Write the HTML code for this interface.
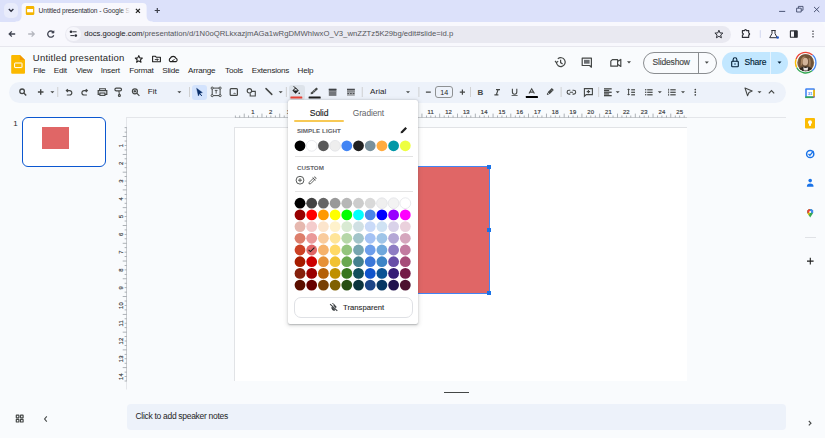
<!DOCTYPE html>
<html><head><meta charset="utf-8">
<style>
*{margin:0;padding:0;box-sizing:border-box}
html,body{width:825px;height:438px;overflow:hidden;background:#f9fbfd;font-family:"Liberation Sans",sans-serif;color:#1f1f1f}
.a{position:absolute}
svg{position:absolute;overflow:visible}
.t{position:absolute;white-space:nowrap;line-height:1}
</style></head><body>

<!-- ===== Chrome tab strip ===== -->
<div class="a" style="left:0;top:0;width:825px;height:22px;background:#dce1fa"></div>
<!-- active tab -->
<svg style="left:0;top:0" width="200" height="24"><path d="M15.5 21.6 Q21.6 21.6 21.6 16 V7 Q21.6 3 25.6 3 H142.6 Q146.6 3 146.6 7 V16 Q146.6 21.6 152.7 21.6 V24 H15.5 Z" fill="#f8f8fd"/></svg>
<div class="a" style="left:3.5px;top:3px;width:14.5px;height:14.5px;border-radius:5px;background:#e9ecfb"></div>
<svg style="left:0;top:0" width="825" height="22">
  <path d="M8.8 9 L11.1 11.3 L13.4 9" fill="none" stroke="#2d3040" stroke-width="1.3"/>
</svg>
<svg style="left:0;top:0" width="40" height="22"><rect x="25.8" y="6.1" width="8.5" height="8.9" rx="1.3" fill="#f4b400"/><rect x="27.1" y="9" width="6" height="3.3" fill="#fff"/></svg>
<div class="t" style="left:38.6px;top:8.2px;font-size:6.7px;letter-spacing:-0.12px;color:#2e3036">Untitled presentation - Google S</div>
<div class="a" style="left:120px;top:4px;width:12px;height:14px;background:linear-gradient(90deg,rgba(248,248,253,0),#f8f8fd 85%)"></div>
<svg style="left:0;top:0" width="825" height="22">
  <path d="M135.9 8.9 L139.9 12.9 M139.9 8.9 L135.9 12.9" stroke="#1f1f1f" stroke-width="1.2"/>
  <path d="M157.3 7.9 V13.1 M154.7 10.5 H159.9" stroke="#3c3f4a" stroke-width="1.2"/>
  <path d="M779.1 11.4 H785.2" stroke="#3b4566" stroke-width="0.9"/>
  <path d="M796.6 8.2 h4.6 v3.8 h-4.6 z M798.4 8.2 V6.4 h4.6 v3.8 h-1.8" fill="none" stroke="#3b4566" stroke-width="0.85"/>
  <path d="M814 6.9 L819.3 12.1 M819.3 6.9 L814 12.1" stroke="#3b4566" stroke-width="0.9"/>
</svg>

<!-- ===== Chrome toolbar ===== -->
<div class="a" style="left:0;top:21.6px;width:825px;height:24.4px;background:#f8f8fd;border-radius:3px 7px 0 0"></div>
<div class="a" style="left:0;top:45.5px;width:825px;height:0.8px;background:#e7e7ee"></div>
<div class="a" style="left:64.8px;top:25.5px;width:666px;height:17px;border-radius:9px;background:#e9e9f1"></div>
<div class="a" style="left:66.4px;top:26.8px;width:14.4px;height:14.4px;border-radius:7.2px;background:#f6f6fb"></div>
<div class="t" style="left:84.2px;top:30.2px;font-size:7.7px;color:#54565b"><span style="color:#202124">docs.google.com</span>/presentation/d/1N0oQRLkxazjmAGa1wRgDMWhIwxO_V3_wnZZTz5K29bg/edit#slide=id.p</div>
<svg style="left:0;top:0" width="825" height="48">
  <!-- back -->
  <path d="M15.2 34 H9.2 M11.8 31.4 L9.2 34 L11.8 36.6" fill="none" stroke="#3f4350" stroke-width="1.3"/>
  <path d="M28.2 34 H34.2 M31.6 31.4 L34.2 34 L31.6 36.6" fill="none" stroke="#b4b6be" stroke-width="1.3"/>
  <!-- reload -->
  <path d="M53.4 32.4 A3.1 3.1 0 1 0 53.7 35.2" fill="none" stroke="#3f4350" stroke-width="1.3"/>
  <path d="M53.9 30.8 V33 H51.7 Z" fill="#3f4350" stroke="#3f4350" stroke-width="0.8" stroke-linejoin="round"/>
  <!-- tune -->
  <path d="M72.4 31.8 H76.6 M70.4 35.6 H74.4" stroke="#2d2f36" stroke-width="1"/>
  <circle cx="71" cy="31.8" r="1.3" fill="#2d2f36"/><circle cx="75.8" cy="35.6" r="1.3" fill="#2d2f36"/>
  <!-- star -->
  <path d="M718.9 30.2 L720 32.9 L722.9 33.1 L720.7 35 L721.4 37.8 L718.9 36.3 L716.4 37.8 L717.1 35 L714.9 33.1 L717.8 32.9 Z" fill="none" stroke="#2d2f36" stroke-width="1"/>
  <!-- extension -->
  <path d="M742.4 30.6 H744.6 A0.95 0.95 0 0 1 746.5 30.6 H748.7 V33 A0.95 0.95 0 0 1 748.7 34.9 V37.4 H742.4 V35 A0.95 0.95 0 0 0 742.4 33.1 Z" fill="none" stroke="#2d2f36" stroke-width="1.15" stroke-linejoin="round"/>
  <path d="M760.3 30.2 V37.8" stroke="#c9d0ee" stroke-width="0.8"/>
  <!-- flask -->
  <path d="M772 30.5 V33.5 L769.7 37.7 H777.2 L775 33.5 V30.5 M771.3 30.5 H775.7" fill="none" stroke="#2d2f36" stroke-width="1"/>
  <circle cx="777.7" cy="37.5" r="1.3" fill="#2458c6"/>
  <!-- sidepanel -->
  <rect x="790.4" y="30.9" width="6.8" height="6.4" rx="0.4" fill="none" stroke="#2d2f36" stroke-width="1.1"/>
  <rect x="794" y="30.9" width="3.2" height="6.4" fill="#2d2f36"/>
  <!-- kebab -->
  <circle cx="813" cy="31.2" r="0.75" fill="#2d2f36"/><circle cx="813" cy="34" r="0.75" fill="#2d2f36"/><circle cx="813" cy="36.8" r="0.75" fill="#2d2f36"/>
</svg>


<!-- ===== Slides header ===== -->
<svg style="left:0;top:0" width="825" height="80">
  <path d="M12.2 54.9 H19.9 L25 60 V72.8 A1 1 0 0 1 24 73.8 H12.2 A1 1 0 0 1 11.2 72.8 V55.9 A1 1 0 0 1 12.2 54.9 Z" fill="#fbb900"/>
  <path d="M19.9 54.9 L25 60 H19.9 Z" fill="#f29900"/>
  <rect x="14.6" y="63" width="7.4" height="4.6" rx="0.4" fill="none" stroke="#fff" stroke-width="1"/>
  <!-- star -->
  <path d="M138.8 55.6 L139.8 57.9 L142.3 58.1 L140.4 59.8 L141 62.2 L138.8 60.9 L136.6 62.2 L137.2 59.8 L135.3 58.1 L137.8 57.9 Z" fill="none" stroke="#1f1f1f" stroke-width="1.1" stroke-linejoin="round"/>
  <!-- folder -->
  <path d="M152.6 56.2 H155.2 L156.2 57.2 H160.4 V61.8 H152.6 Z" fill="none" stroke="#1f1f1f" stroke-width="1.1" stroke-linejoin="round"/>
  <path d="M154.8 59.6 H158.1 M157 58.4 L158.2 59.6 L157 60.8" fill="none" stroke="#1f1f1f" stroke-width="0.9"/>
  <!-- cloud -->
  <path d="M170.2 61.6 A1.9 1.9 0 0 1 170.3 58.3 A3 3 0 0 1 175.9 58.3 A1.8 1.8 0 0 1 176.2 61.6 Z" fill="none" stroke="#1f1f1f" stroke-width="1.1" stroke-linejoin="round"/>
  <path d="M172 60.2 L172.8 60.9 L174.6 59" fill="none" stroke="#1f1f1f" stroke-width="0.9"/>
  <!-- history -->
  <path d="M556.4 62.3 A4.4 4.4 0 1 0 557.8 58.9" fill="none" stroke="#444746" stroke-width="1.2"/>
  <path d="M555 60.9 L556.4 62.7 L558.2 61.1" fill="none" stroke="#444746" stroke-width="1.1"/>
  <path d="M560.6 59.8 V62.6 L562.6 63.9" fill="none" stroke="#444746" stroke-width="1.2"/>
  <!-- comments -->
  <path d="M582.2 58.1 H591.4 V67.2 L589.6 65.5 H582.2 Z" fill="none" stroke="#444746" stroke-width="1.2" stroke-linejoin="round"/>
  <rect x="584" y="59.8" width="5.6" height="3.9" fill="#6b6e72"/>
  <!-- meet -->
  <path d="M612.4 59.6 H617.6 V66.2 H610.8 V61.2 Z M617.6 61.6 L620.8 59.4 V66.4 L617.6 64.2" fill="none" stroke="#444746" stroke-width="1.2" stroke-linejoin="round"/>
  <path d="M627 61.3 H631 L629 63.5 Z" fill="#444746"/>
</svg>
<div class="t" style="left:32.8px;top:52.9px;font-size:9.5px;letter-spacing:0.22px;color:#262626">Untitled presentation</div>
<div class="t" style="left:33.2px;top:67.3px;font-size:8.1px;letter-spacing:-0.22px;color:#1f1f1f">File</div>
<div class="t" style="left:53.8px;top:67.3px;font-size:8.1px;letter-spacing:-0.22px;color:#1f1f1f">Edit</div>
<div class="t" style="left:75.9px;top:67.3px;font-size:8.1px;letter-spacing:-0.22px;color:#1f1f1f">View</div>
<div class="t" style="left:100.8px;top:67.3px;font-size:8.1px;letter-spacing:-0.22px;color:#1f1f1f">Insert</div>
<div class="t" style="left:129.2px;top:67.3px;font-size:8.1px;letter-spacing:-0.22px;color:#1f1f1f">Format</div>
<div class="t" style="left:162.3px;top:67.3px;font-size:8.1px;letter-spacing:-0.22px;color:#1f1f1f">Slide</div>
<div class="t" style="left:188px;top:67.3px;font-size:8.1px;letter-spacing:-0.22px;color:#1f1f1f">Arrange</div>
<div class="t" style="left:225.1px;top:67.3px;font-size:8.1px;letter-spacing:-0.22px;color:#1f1f1f">Tools</div>
<div class="t" style="left:251.8px;top:67.3px;font-size:8.1px;letter-spacing:-0.22px;color:#1f1f1f">Extensions</div>
<div class="t" style="left:297.6px;top:67.3px;font-size:8.1px;letter-spacing:-0.22px;color:#1f1f1f">Help</div>

<div class="a" style="left:643.4px;top:52px;width:74px;height:21.8px;border:0.9px solid #8a8d90;border-radius:11px"></div>
<div class="a" style="left:698.4px;top:52px;width:0.9px;height:21.8px;background:#8a8d90"></div>
<div class="t" style="left:652.6px;top:58.2px;font-size:8.5px;letter-spacing:-0.18px;color:#444746;-webkit-text-stroke:0.15px #444746">Slideshow</div>
<div class="a" style="left:721.8px;top:52px;width:66.6px;height:21.8px;background:#c2e7ff;border-radius:11px"></div>
<div class="a" style="left:770.2px;top:52px;width:0.8px;height:21.8px;background:#e6f4ff"></div>
<div class="t" style="left:744.6px;top:58px;font-size:8.5px;letter-spacing:-0.2px;color:#001d35;-webkit-text-stroke:0.15px #001d35">Share</div>
<svg style="left:0;top:0" width="825" height="80">
  <path d="M704.8 61.6 H708.8 L706.8 63.8 Z" fill="#444746"/>
  <path d="M777.5 61.6 H781.5 L779.5 63.8 Z" fill="#001d35"/>
  <rect x="731.7" y="61.2" width="6.6" height="5.5" rx="0.8" fill="none" stroke="#001d35" stroke-width="1.1"/>
  <path d="M733.1 61.2 V59.7 A1.9 1.9 0 0 1 736.9 59.7 V61.2" fill="none" stroke="#001d35" stroke-width="1.1"/><circle cx="735" cy="64" r="0.7" fill="#001d35"/>
  <path d="M796.13 59.03 A10.25 10.25 0 0 1 812.56 55.08" fill="none" stroke="#ea4335" stroke-width="1.3"/><path d="M812.56 55.08 A10.25 10.25 0 0 1 812.15 70.67" fill="none" stroke="#4285f4" stroke-width="1.3"/><path d="M812.15 70.67 A10.25 10.25 0 0 1 796.65 67.51" fill="none" stroke="#34a853" stroke-width="1.3"/><path d="M796.65 67.51 A10.25 10.25 0 0 1 796.13 59.03" fill="none" stroke="#fbbc04" stroke-width="1.3"/><circle cx="805.7" cy="62.7" r="8.5" fill="#8b6b4c"/>
  <path d="M798.5 61 Q799 54.5 805.5 54.2 Q812.5 54.5 813 61 Q813.5 67 811 70 H800.5 Q798 67 798.5 61 Z" fill="#6f5238"/>
  <ellipse cx="805.2" cy="61.6" rx="2.9" ry="3.9" fill="#d3b49a"/>
  <path d="M801 60 Q802 56 805.5 56.5 Q803 58 802.8 62 Q802 66 800.6 66 Z" fill="#a88462"/>
  <path d="M810 58 Q811.5 62 810.5 67 L808.6 66 Q809.6 62 808.6 58.5 Z" fill="#a08060"/>
  <path d="M799.3 68.4 Q805.7 64.5 812.1 68.4 A8.5 8.5 0 0 1 799.3 68.4 Z" fill="#2e2620"/>
  <path d="M803.2 67.2 Q805.6 68.6 808.2 67.2 L807.6 70.6 H803.8 Z" fill="#e8e2e0"/>
</svg>

<!-- ===== Toolbar pill ===== -->
<div class="a" style="left:9px;top:81.8px;width:777px;height:20.8px;border-radius:10.4px;background:#edf2fa"></div>
<div class="a" style="left:191.9px;top:84.7px;width:15.1px;height:15.2px;border-radius:3px;background:#d3e3fd"></div>
<div class="a" style="left:288.7px;top:84.7px;width:16.7px;height:15px;border-radius:3px;background:#dde3ea"></div>
<div class="t" style="left:147.7px;top:88.3px;font-size:8.1px;color:#1f1f1f">Fit</div>
<div class="t" style="left:370.1px;top:88px;font-size:8.1px;color:#1f1f1f">Arial</div>
<div class="a" style="left:435.4px;top:85.6px;width:18.1px;height:12.8px;border:0.9px solid #8e9193;border-radius:3px"></div>
<div class="t" style="left:440.3px;top:88.6px;font-size:7.2px;color:#1f1f1f">14</div>
<svg style="left:0;top:0" width="825" height="110">
  <g fill="none" stroke="#444746" stroke-width="1.1">
  <!-- search -->
  <circle cx="22.1" cy="91.3" r="2.3" stroke-width="1.3"/><path d="M23.8 93 L26.2 95.4" stroke-width="1.4"/>
  <!-- plus -->
  <path d="M40.7 89.2 V94.8 M37.9 92 H43.5" stroke-width="1.4"/>
  <!-- undo / redo -->
  <path d="M66.5 90.6 H69.6 A2.2 2.2 0 0 1 69.6 95 H66.8 M67.9 89.2 L66.4 90.6 L67.9 92" stroke-width="1.2"/>
  <path d="M87.2 90.6 H84.1 A2.2 2.2 0 0 0 84.1 95 H86.9 M85.8 89.2 L87.3 90.6 L85.8 92" stroke-width="1.2"/>
  <!-- print -->
  <path d="M99.6 90.4 V88.8 H105.4 V90.4" stroke-width="1.1"/><path d="M98.2 90.6 H106.8 V94.3 H98.2 Z" stroke-width="1.2"/><rect x="99.9" y="93" width="5" height="2.4" fill="#edf2fa" stroke-width="1.1"/>
  <!-- paint format -->
  <rect x="114.9" y="88.1" width="6.6" height="2.8" rx="1.4" stroke-width="1.2"/><path d="M118.9 91 L119.3 94" stroke-width="1.1"/><circle cx="119.4" cy="95.4" r="1" stroke-width="1.1"/>
  <!-- zoom -->
  <circle cx="134.9" cy="91.3" r="2.5" stroke-width="1.2"/><path d="M136.8 93.2 L139.4 95.8 M133.6 91.3 H136.2 M134.9 90 V92.6" stroke-width="1.2"/>
  <!-- textbox -->
  <rect x="212.2" y="88.1" width="7.9" height="7.5" stroke-width="1"/>
  <circle cx="212.2" cy="88.1" r="1.1" fill="#edf2fa" stroke-width="0.9"/><circle cx="220.1" cy="88.1" r="1.1" fill="#edf2fa" stroke-width="0.9"/>
  <circle cx="212.2" cy="95.6" r="1.1" fill="#edf2fa" stroke-width="0.9"/><circle cx="220.1" cy="95.6" r="1.1" fill="#edf2fa" stroke-width="0.9"/>
  <path d="M214.8 90.4 H217.5 M216.15 90.4 V93.6" stroke-width="0.9"/>
  <!-- image -->
  <rect x="230.2" y="88.6" width="7.2" height="6.8" rx="0.9" stroke-width="1.2"/>
  <!-- shape -->
  <circle cx="249.4" cy="90.8" r="2.2" stroke-width="1.1"/><path d="M251.4 91.4 H255.3 V96 H250.2 V93.2" stroke-width="1.1"/>
  <!-- line -->
  <path d="M266 88.6 L271.8 94.4" stroke-width="1.5" stroke-linecap="round"/>
  <!-- border weight / dash -->
  <!-- minus / plus -->
  <path d="M425.9 92.2 H430.8 M462.4 89.5 V94.8 M459.8 92.2 H465" stroke-width="1.2"/>
  <!-- link -->
  <path d="M570.3 90.3 H569 A1.9 1.9 0 0 0 569 94.1 H570.3 M572.5 90.3 H573.8 A1.9 1.9 0 0 1 573.8 94.1 H572.5 M569.8 92.2 H573"/>
  <!-- comment add -->
  <path d="M584.4 88.6 H592.4 V94.6 H586.3 L584.4 96.2 Z M588.4 89.9 V93.3 M586.7 91.6 H590.1"/>
  <!-- line spacing -->
  
  <!-- cursor -->
  <path d="M745 88 L752.2 90.9 L749 92.4 L747.5 95.7 Z" stroke-linejoin="round"/>
  <path d="M768.8 93.3 L771.5 90.6 L774.2 93.3" stroke-width="1.2"/>
  </g>
  <!-- separators -->
  <g fill="#c7c7c7">
  <rect x="57.4" y="87" width="0.8" height="10"/><rect x="189.1" y="87" width="0.8" height="10"/><rect x="285.9" y="87" width="0.8" height="10"/>
  <rect x="361.8" y="87" width="0.8" height="10"/><rect x="418.5" y="87" width="0.8" height="10"/><rect x="470.1" y="87" width="0.8" height="10"/>
  <rect x="598.3" y="87" width="0.8" height="10"/><rect x="560.7" y="87" width="0.8" height="10"/>
  </g>
  <g fill="#444746">
  <!-- carets -->
  <path d="M50.4 91.3 H54.4 L52.4 93.3 Z"/><path d="M177.4 91.3 H181.4 L179.4 93.3 Z"/><path d="M278.7 91.3 H282.7 L280.7 93.3 Z"/>
  <path d="M406 91.3 H410 L408 93.3 Z"/><path d="M615.7 91.3 H619.7 L617.7 93.3 Z"/><path d="M657.8 91.3 H661.8 L659.8 93.3 Z"/>
  <path d="M681 91.3 H685 L683 93.3 Z"/><path d="M757.5 91.3 H761.5 L759.5 93.3 Z"/>
  <!-- image inner -->
  <path d="M233.2 93.8 L234.2 92.6 L235 93.4 L235.6 92.9 L236.2 93.8 Z"/>
  <!-- border weight -->
  <rect x="328.8" y="88.8" width="7.6" height="7.1" fill="#74777b"/><rect x="328.8" y="88.8" width="7.6" height="1.4" fill="#3f4246"/><rect x="328.8" y="91" width="7.6" height="0.5" fill="#9a9da1"/>
  <!-- border dash -->
  <rect x="347" y="88.8" width="7.8" height="7.1" fill="#a9acb0"/><rect x="347" y="88.8" width="7.8" height="1.4" fill="#4a4d51"/>
  <rect x="347.4" y="93" width="1.6" height="1.1" fill="#4a4d51"/><rect x="350.1" y="93" width="1.6" height="1.1" fill="#4a4d51"/><rect x="352.8" y="93" width="1.6" height="1.1" fill="#4a4d51"/>
  <rect x="347" y="90.6" width="7.8" height="1.8" fill="#8c8f93"/>
  <!-- B I U A -->
  <text x="480.4" y="95.3" font-size="8" font-weight="700" text-anchor="middle" font-family="Liberation Sans">B</text>
  <path d="M496 89.6 H500 M494.4 94.9 H498.4 M498.1 89.6 L496.3 94.9" fill="none" stroke="#444746" stroke-width="1.2"/>
  <path d="M512.4 88.8 V92 A2.2 2.2 0 0 0 516.8 92 V88.8" fill="none" stroke="#444746" stroke-width="1.1"/><rect x="511.6" y="95.2" width="6" height="0.8"/>
  <path d="M529 93.6 L531.7 88.8 L534.4 93.6 M529.9 92.1 H533.5" fill="none" stroke="#444746" stroke-width="1.1"/>
  <rect x="525.8" y="96" width="12.2" height="1.9" rx="0.4" fill="#000"/>
  <!-- highlighter -->
  <path d="M547.6 92.2 L551.8 88 L553.8 90 L549.6 94.2 Z M547.2 92.8 L549 94.6 L547.4 94.9 L546.8 94.3 Z"/><path d="M551.3 89.9 L552 90.6" stroke="#edf2fa" stroke-width="0.6"/>
  <!-- align -->
  <rect x="604" y="88.2" width="7.7" height="1.3"/><rect x="604" y="89.9" width="5.2" height="1.3"/><rect x="604" y="91.6" width="7.7" height="1.3"/><rect x="604" y="93.3" width="5.2" height="1.3"/><rect x="604" y="95" width="7.7" height="1.3"/>
  <!-- bullets -->
  <circle cx="645.7" cy="89.8" r="0.75"/><circle cx="645.7" cy="92.3" r="0.75"/><circle cx="645.7" cy="94.8" r="0.75"/>
  <rect x="647.2" y="89.2" width="5.4" height="1.2"/><rect x="647.2" y="91.7" width="5.4" height="1.2"/><rect x="647.2" y="94.2" width="5.4" height="1.2"/>
  <!-- numbered -->
  <rect x="668.2" y="88.8" width="0.9" height="1.9"/><rect x="668.2" y="91.3" width="0.9" height="1.9"/><rect x="668.2" y="93.8" width="0.9" height="1.9"/>
  <rect x="670.3" y="89.2" width="5.4" height="1.2"/><rect x="670.3" y="91.7" width="5.4" height="1.2"/><rect x="670.3" y="94.2" width="5.4" height="1.2"/>
  <!-- line spacing -->
  <rect x="631.2" y="89.2" width="3.8" height="1.2"/><rect x="631.2" y="91.7" width="3.8" height="1.2"/><rect x="631.2" y="94.2" width="3.8" height="1.2"/>
  <path d="M627 90 L628.6 88.6 L630.2 90 Z M627 94 L628.6 95.4 L630.2 94 Z"/><rect x="628.1" y="89.6" width="1" height="4.6"/>
  <!-- kebab -->
  <circle cx="695.3" cy="89.6" r="0.85"/><circle cx="695.3" cy="92.2" r="0.85"/><circle cx="695.3" cy="94.8" r="0.85"/>
  <!-- select arrow -->
  <path d="M196.6 88.2 L202.4 92.6 L199.8 93.2 L198.4 96 Z" fill="#0b2f6b" stroke="#0b2f6b" stroke-width="0.4" stroke-linejoin="round"/><path d="M199.4 93 L201.8 96" stroke="#0b2f6b" stroke-width="1"/>
  </g>
  <!-- fill color -->
  <path d="M292.4 90.6 L295.6 87.4 L298.8 90.6 L295.6 93.8 Z" fill="#1f1f1f"/>
  <path d="M293.6 90.6 L295.6 88.6 L297.6 90.6 Z" fill="#dde3ea"/>
  <path d="M293.6 86.2 L296 88.6" stroke="#1f1f1f" stroke-width="1"/>
  <circle cx="299.2" cy="93.3" r="0.8" fill="#1f1f1f"/>
  <rect x="290.4" y="96.4" width="11.9" height="2.1" rx="0.5" fill="#ea4335"/>
  <!-- pen -->
  <path d="M310.6 94.3 L311 92.4 L316.4 87.4 L318 89 L312.6 94 Z" fill="#444746"/>
  <path d="M312.5 91.2 L314 92.6 M314 89.8 L315.5 91.2" stroke="#edf2fa" stroke-width="0.5"/>
  <rect x="308.6" y="96.6" width="12.1" height="1.9" rx="0.5" fill="#1f1f1f"/>
</svg>


<!-- ===== Filmstrip ===== -->
<div class="t" style="left:13.2px;top:120.1px;font-size:8px;color:#1f1f1f">1</div>
<div class="a" style="left:22px;top:117.4px;width:83.6px;height:49.4px;border:1.8px solid #0b57d0;border-radius:6px;background:#fff"></div>
<div class="a" style="left:42.3px;top:127px;width:26.7px;height:21.9px;background:#e06666"></div>

<!-- ===== Canvas ===== -->
<div class="a" style="left:234.2px;top:126.8px;width:452.8px;height:254.6px;background:#fff;border-top:1px solid #e1e3e6;border-left:1px solid #e1e3e6"></div>
<div class="a" style="left:340px;top:166px;width:149.5px;height:127.8px;background:#e06666;border:1px solid #4285f4"></div>
<div class="a" style="left:487px;top:165px;width:4px;height:4px;background:#1a73e8"></div>
<div class="a" style="left:487px;top:228px;width:4px;height:4px;background:#1a73e8"></div>
<div class="a" style="left:487px;top:291.2px;width:4px;height:4px;background:#1a73e8"></div>
<svg style="left:0;top:0" width="825" height="438">
<rect x="126.4" y="117.2" width="659.6" height="0.8" fill="#dfe1e5"/>
<rect x="126.2" y="117.2" width="0.8" height="272.3" fill="#dfe1e5"/>
<rect x="235" y="117.2" width="452" height="0.8" fill="#bfc2c6"/>
<rect x="126.2" y="127.3" width="0.8" height="254" fill="#bfc2c6"/>
<g fill="#9aa0a6"><rect x="234.90" y="115.50" width="0.8" height="2.1"/><rect x="239.34" y="115.50" width="0.8" height="2.1"/><rect x="243.79" y="113.60" width="0.8" height="4.0"/><rect x="248.23" y="115.50" width="0.8" height="2.1"/><rect x="252.68" y="115.50" width="0.8" height="2.1"/><rect x="257.12" y="115.50" width="0.8" height="2.1"/><rect x="261.56" y="113.60" width="0.8" height="4.0"/><rect x="266.01" y="115.50" width="0.8" height="2.1"/><rect x="270.45" y="115.50" width="0.8" height="2.1"/><rect x="274.90" y="115.50" width="0.8" height="2.1"/><rect x="279.34" y="113.60" width="0.8" height="4.0"/><rect x="283.78" y="115.50" width="0.8" height="2.1"/><rect x="288.23" y="115.50" width="0.8" height="2.1"/><rect x="292.67" y="115.50" width="0.8" height="2.1"/><rect x="297.11" y="113.60" width="0.8" height="4.0"/><rect x="301.56" y="115.50" width="0.8" height="2.1"/><rect x="306.00" y="115.50" width="0.8" height="2.1"/><rect x="310.45" y="115.50" width="0.8" height="2.1"/><rect x="314.89" y="113.60" width="0.8" height="4.0"/><rect x="319.33" y="115.50" width="0.8" height="2.1"/><rect x="323.78" y="115.50" width="0.8" height="2.1"/><rect x="328.22" y="115.50" width="0.8" height="2.1"/><rect x="332.67" y="113.60" width="0.8" height="4.0"/><rect x="337.11" y="115.50" width="0.8" height="2.1"/><rect x="341.55" y="115.50" width="0.8" height="2.1"/><rect x="346.00" y="115.50" width="0.8" height="2.1"/><rect x="350.44" y="113.60" width="0.8" height="4.0"/><rect x="354.89" y="115.50" width="0.8" height="2.1"/><rect x="359.33" y="115.50" width="0.8" height="2.1"/><rect x="363.77" y="115.50" width="0.8" height="2.1"/><rect x="368.22" y="113.60" width="0.8" height="4.0"/><rect x="372.66" y="115.50" width="0.8" height="2.1"/><rect x="377.10" y="115.50" width="0.8" height="2.1"/><rect x="381.55" y="115.50" width="0.8" height="2.1"/><rect x="385.99" y="113.60" width="0.8" height="4.0"/><rect x="390.44" y="115.50" width="0.8" height="2.1"/><rect x="394.88" y="115.50" width="0.8" height="2.1"/><rect x="399.32" y="115.50" width="0.8" height="2.1"/><rect x="403.77" y="113.60" width="0.8" height="4.0"/><rect x="408.21" y="115.50" width="0.8" height="2.1"/><rect x="412.66" y="115.50" width="0.8" height="2.1"/><rect x="417.10" y="115.50" width="0.8" height="2.1"/><rect x="421.54" y="113.60" width="0.8" height="4.0"/><rect x="425.99" y="115.50" width="0.8" height="2.1"/><rect x="430.43" y="115.50" width="0.8" height="2.1"/><rect x="434.88" y="115.50" width="0.8" height="2.1"/><rect x="439.32" y="113.60" width="0.8" height="4.0"/><rect x="443.76" y="115.50" width="0.8" height="2.1"/><rect x="448.21" y="115.50" width="0.8" height="2.1"/><rect x="452.65" y="115.50" width="0.8" height="2.1"/><rect x="457.09" y="113.60" width="0.8" height="4.0"/><rect x="461.54" y="115.50" width="0.8" height="2.1"/><rect x="465.98" y="115.50" width="0.8" height="2.1"/><rect x="470.43" y="115.50" width="0.8" height="2.1"/><rect x="474.87" y="113.60" width="0.8" height="4.0"/><rect x="479.31" y="115.50" width="0.8" height="2.1"/><rect x="483.76" y="115.50" width="0.8" height="2.1"/><rect x="488.20" y="115.50" width="0.8" height="2.1"/><rect x="492.65" y="113.60" width="0.8" height="4.0"/><rect x="497.09" y="115.50" width="0.8" height="2.1"/><rect x="501.53" y="115.50" width="0.8" height="2.1"/><rect x="505.98" y="115.50" width="0.8" height="2.1"/><rect x="510.42" y="113.60" width="0.8" height="4.0"/><rect x="514.87" y="115.50" width="0.8" height="2.1"/><rect x="519.31" y="115.50" width="0.8" height="2.1"/><rect x="523.75" y="115.50" width="0.8" height="2.1"/><rect x="528.20" y="113.60" width="0.8" height="4.0"/><rect x="532.64" y="115.50" width="0.8" height="2.1"/><rect x="537.09" y="115.50" width="0.8" height="2.1"/><rect x="541.53" y="115.50" width="0.8" height="2.1"/><rect x="545.97" y="113.60" width="0.8" height="4.0"/><rect x="550.42" y="115.50" width="0.8" height="2.1"/><rect x="554.86" y="115.50" width="0.8" height="2.1"/><rect x="559.30" y="115.50" width="0.8" height="2.1"/><rect x="563.75" y="113.60" width="0.8" height="4.0"/><rect x="568.19" y="115.50" width="0.8" height="2.1"/><rect x="572.64" y="115.50" width="0.8" height="2.1"/><rect x="577.08" y="115.50" width="0.8" height="2.1"/><rect x="581.52" y="113.60" width="0.8" height="4.0"/><rect x="585.97" y="115.50" width="0.8" height="2.1"/><rect x="590.41" y="115.50" width="0.8" height="2.1"/><rect x="594.86" y="115.50" width="0.8" height="2.1"/><rect x="599.30" y="113.60" width="0.8" height="4.0"/><rect x="603.74" y="115.50" width="0.8" height="2.1"/><rect x="608.19" y="115.50" width="0.8" height="2.1"/><rect x="612.63" y="115.50" width="0.8" height="2.1"/><rect x="617.08" y="113.60" width="0.8" height="4.0"/><rect x="621.52" y="115.50" width="0.8" height="2.1"/><rect x="625.96" y="115.50" width="0.8" height="2.1"/><rect x="630.41" y="115.50" width="0.8" height="2.1"/><rect x="634.85" y="113.60" width="0.8" height="4.0"/><rect x="639.29" y="115.50" width="0.8" height="2.1"/><rect x="643.74" y="115.50" width="0.8" height="2.1"/><rect x="648.18" y="115.50" width="0.8" height="2.1"/><rect x="652.63" y="113.60" width="0.8" height="4.0"/><rect x="657.07" y="115.50" width="0.8" height="2.1"/><rect x="661.51" y="115.50" width="0.8" height="2.1"/><rect x="665.96" y="115.50" width="0.8" height="2.1"/><rect x="670.40" y="113.60" width="0.8" height="4.0"/><rect x="674.85" y="115.50" width="0.8" height="2.1"/><rect x="679.29" y="115.50" width="0.8" height="2.1"/><rect x="683.73" y="115.50" width="0.8" height="2.1"/><rect x="124.60" y="127.30" width="2.1" height="0.8"/><rect x="124.60" y="131.74" width="2.1" height="0.8"/><rect x="122.70" y="136.19" width="4.0" height="0.8"/><rect x="124.60" y="140.63" width="2.1" height="0.8"/><rect x="124.60" y="145.08" width="2.1" height="0.8"/><rect x="124.60" y="149.52" width="2.1" height="0.8"/><rect x="122.70" y="153.96" width="4.0" height="0.8"/><rect x="124.60" y="158.41" width="2.1" height="0.8"/><rect x="124.60" y="162.85" width="2.1" height="0.8"/><rect x="124.60" y="167.30" width="2.1" height="0.8"/><rect x="122.70" y="171.74" width="4.0" height="0.8"/><rect x="124.60" y="176.18" width="2.1" height="0.8"/><rect x="124.60" y="180.63" width="2.1" height="0.8"/><rect x="124.60" y="185.07" width="2.1" height="0.8"/><rect x="122.70" y="189.51" width="4.0" height="0.8"/><rect x="124.60" y="193.96" width="2.1" height="0.8"/><rect x="124.60" y="198.40" width="2.1" height="0.8"/><rect x="124.60" y="202.85" width="2.1" height="0.8"/><rect x="122.70" y="207.29" width="4.0" height="0.8"/><rect x="124.60" y="211.73" width="2.1" height="0.8"/><rect x="124.60" y="216.18" width="2.1" height="0.8"/><rect x="124.60" y="220.62" width="2.1" height="0.8"/><rect x="122.70" y="225.07" width="4.0" height="0.8"/><rect x="124.60" y="229.51" width="2.1" height="0.8"/><rect x="124.60" y="233.95" width="2.1" height="0.8"/><rect x="124.60" y="238.40" width="2.1" height="0.8"/><rect x="122.70" y="242.84" width="4.0" height="0.8"/><rect x="124.60" y="247.29" width="2.1" height="0.8"/><rect x="124.60" y="251.73" width="2.1" height="0.8"/><rect x="124.60" y="256.17" width="2.1" height="0.8"/><rect x="122.70" y="260.62" width="4.0" height="0.8"/><rect x="124.60" y="265.06" width="2.1" height="0.8"/><rect x="124.60" y="269.50" width="2.1" height="0.8"/><rect x="124.60" y="273.95" width="2.1" height="0.8"/><rect x="122.70" y="278.39" width="4.0" height="0.8"/><rect x="124.60" y="282.84" width="2.1" height="0.8"/><rect x="124.60" y="287.28" width="2.1" height="0.8"/><rect x="124.60" y="291.72" width="2.1" height="0.8"/><rect x="122.70" y="296.17" width="4.0" height="0.8"/><rect x="124.60" y="300.61" width="2.1" height="0.8"/><rect x="124.60" y="305.06" width="2.1" height="0.8"/><rect x="124.60" y="309.50" width="2.1" height="0.8"/><rect x="122.70" y="313.94" width="4.0" height="0.8"/><rect x="124.60" y="318.39" width="2.1" height="0.8"/><rect x="124.60" y="322.83" width="2.1" height="0.8"/><rect x="124.60" y="327.28" width="2.1" height="0.8"/><rect x="122.70" y="331.72" width="4.0" height="0.8"/><rect x="124.60" y="336.16" width="2.1" height="0.8"/><rect x="124.60" y="340.61" width="2.1" height="0.8"/><rect x="124.60" y="345.05" width="2.1" height="0.8"/><rect x="122.70" y="349.49" width="4.0" height="0.8"/><rect x="124.60" y="353.94" width="2.1" height="0.8"/><rect x="124.60" y="358.38" width="2.1" height="0.8"/><rect x="124.60" y="362.83" width="2.1" height="0.8"/><rect x="122.70" y="367.27" width="4.0" height="0.8"/><rect x="124.60" y="371.71" width="2.1" height="0.8"/><rect x="124.60" y="376.16" width="2.1" height="0.8"/><rect x="124.60" y="380.60" width="2.1" height="0.8"/></g>
<g fill="#3c4043" stroke="#3c4043" stroke-width="0.18" font-size="5.9" font-family="Liberation Sans" letter-spacing="0.2"><text x="253.08" y="114.1" text-anchor="middle">1</text><text x="270.85" y="114.1" text-anchor="middle">2</text><text x="288.63" y="114.1" text-anchor="middle">3</text><text x="306.40" y="114.1" text-anchor="middle">4</text><text x="324.18" y="114.1" text-anchor="middle">5</text><text x="341.95" y="114.1" text-anchor="middle">6</text><text x="359.73" y="114.1" text-anchor="middle">7</text><text x="377.50" y="114.1" text-anchor="middle">8</text><text x="395.28" y="114.1" text-anchor="middle">9</text><text x="413.06" y="114.1" text-anchor="middle">10</text><text x="430.83" y="114.1" text-anchor="middle">11</text><text x="448.61" y="114.1" text-anchor="middle">12</text><text x="466.38" y="114.1" text-anchor="middle">13</text><text x="484.16" y="114.1" text-anchor="middle">14</text><text x="501.93" y="114.1" text-anchor="middle">15</text><text x="519.71" y="114.1" text-anchor="middle">16</text><text x="537.49" y="114.1" text-anchor="middle">17</text><text x="555.26" y="114.1" text-anchor="middle">18</text><text x="573.04" y="114.1" text-anchor="middle">19</text><text x="590.81" y="114.1" text-anchor="middle">20</text><text x="608.59" y="114.1" text-anchor="middle">21</text><text x="626.36" y="114.1" text-anchor="middle">22</text><text x="644.14" y="114.1" text-anchor="middle">23</text><text x="661.91" y="114.1" text-anchor="middle">24</text><text x="679.69" y="114.1" text-anchor="middle">25</text><text x="0" y="0" text-anchor="middle" transform="translate(122.6 145.48) rotate(-90)">1</text><text x="0" y="0" text-anchor="middle" transform="translate(122.6 163.25) rotate(-90)">2</text><text x="0" y="0" text-anchor="middle" transform="translate(122.6 181.03) rotate(-90)">3</text><text x="0" y="0" text-anchor="middle" transform="translate(122.6 198.80) rotate(-90)">4</text><text x="0" y="0" text-anchor="middle" transform="translate(122.6 216.58) rotate(-90)">5</text><text x="0" y="0" text-anchor="middle" transform="translate(122.6 234.35) rotate(-90)">6</text><text x="0" y="0" text-anchor="middle" transform="translate(122.6 252.13) rotate(-90)">7</text><text x="0" y="0" text-anchor="middle" transform="translate(122.6 269.90) rotate(-90)">8</text><text x="0" y="0" text-anchor="middle" transform="translate(122.6 287.68) rotate(-90)">9</text><text x="0" y="0" text-anchor="middle" transform="translate(122.6 305.46) rotate(-90)">10</text><text x="0" y="0" text-anchor="middle" transform="translate(122.6 323.23) rotate(-90)">11</text><text x="0" y="0" text-anchor="middle" transform="translate(122.6 341.01) rotate(-90)">12</text><text x="0" y="0" text-anchor="middle" transform="translate(122.6 358.78) rotate(-90)">13</text><text x="0" y="0" text-anchor="middle" transform="translate(122.6 376.56) rotate(-90)">14</text></g>
</svg>

<!-- drag handle -->
<div class="a" style="left:443.8px;top:391.6px;width:25.7px;height:0.9px;background:#444746"></div>
<!-- notes -->
<div class="a" style="left:127px;top:404px;width:659.4px;height:25.8px;border-radius:4px;background:#edf2fa"></div>
<div class="t" style="left:135.5px;top:412.2px;font-size:8.5px;letter-spacing:-0.3px;color:#1f1f1f">Click to add speaker notes</div>
<svg style="left:0;top:0" width="825" height="438">
  <g fill="none" stroke="#444746" stroke-width="1">
  <rect x="16.3" y="415.2" width="2.6" height="2.6" rx="0.3" stroke-width="1.2"/><rect x="20.5" y="415.2" width="2.6" height="2.6" rx="0.3" stroke-width="1.2"/>
  <rect x="16.3" y="419.4" width="2.6" height="2.6" rx="0.3" stroke-width="1.2"/><rect x="20.5" y="419.4" width="2.6" height="2.6" rx="0.3" stroke-width="1.2"/>
  <path d="M46.8 416.4 L44.6 419 L46.8 421.6" stroke-width="1.1"/>
  <path d="M808.8 421 L811 423.2 L808.8 425.4" stroke-width="1.1"/>
  </g>
</svg>

<!-- ===== Right side panel ===== -->
<svg style="left:0;top:0" width="825" height="438">
  <!-- calendar -->
  <rect x="805.2" y="88.2" width="9.7" height="9.9" rx="1" fill="#4285f4"/>
  <rect x="806.8" y="89.8" width="6.5" height="6.6" fill="#fff"/>
  <rect x="805.2" y="96.4" width="8" height="1.7" fill="#34a853"/>
  <rect x="813.2" y="89.8" width="1.7" height="6.6" fill="#fbbc04"/>
  <path d="M813.2 96.4 L814.9 96.4 L813.2 98.1 Z" fill="#ea4335"/>
  <text x="810" y="95.1" font-size="4.2" text-anchor="middle" fill="#4285f4" font-family="Liberation Sans" font-weight="700">31</text>
  <!-- keep -->
  <rect x="805" y="118" width="10" height="10.5" rx="1" fill="#fbbc04"/>
  <circle cx="810" cy="122.2" r="2" fill="#fff"/><rect x="809" y="124" width="2" height="1.8" fill="#fff"/>
  <!-- tasks -->
  <circle cx="810.2" cy="154" r="3.6" fill="none" stroke="#1a73e8" stroke-width="1.5"/>
  <path d="M808.5 154 L809.9 155.3 L813.5 151" fill="none" stroke="#1a73e8" stroke-width="1.3"/>
  <!-- contacts -->
  <circle cx="810.2" cy="180.6" r="1.8" fill="#1a73e8"/>
  <path d="M806.9 186.3 A3.3 2.8 0 0 1 813.5 186.3 V186.8 H806.9 Z" fill="#1a73e8"/>
  <!-- maps -->
  <path d="M810.2 217.5 L807.6 213.4 A3 3 0 1 1 812.8 213.4 Z" fill="#34a853"/>
  <path d="M807.4 213.2 A3 3 0 0 1 810.2 209 L810.2 212 Z" fill="#ea4335"/>
  <path d="M810.2 209 A3 3 0 0 1 813 213.2 L810.2 212 Z" fill="#4285f4"/>
  <path d="M807.6 213.4 L810.2 212 L809 215.5 Z" fill="#fbbc04"/>
  <circle cx="810.2" cy="212" r="1" fill="#fff"/>
  <rect x="805" y="237" width="11" height="0.8" fill="#dadce0"/>
  <path d="M810.3 257.8 V264.4 M807 261.1 H813.6" stroke="#1f1f1f" stroke-width="1.1"/>
</svg>


<!-- ===== Color popup ===== -->
<div class="a" style="left:287.7px;top:100.2px;width:130.6px;height:223.8px;background:#fff;border-radius:2px;box-shadow:0 0.5px 1.5px rgba(60,64,67,.3),0 1px 4px 1px rgba(60,64,67,.15)"></div>
<div class="t" style="left:309.8px;top:108.5px;font-size:8.6px;letter-spacing:-0.12px;color:#1f1f1f;-webkit-text-stroke:0.15px #1f1f1f">Solid</div>
<div class="t" style="left:352.8px;top:108.6px;font-size:8.4px;letter-spacing:-0.12px;color:#5f6368">Gradient</div>
<div class="a" style="left:294.4px;top:120px;width:49.4px;height:1.6px;background:#f7c955;border-radius:1px"></div>
<div class="t" style="left:296.9px;top:128.1px;font-size:6.2px;font-weight:700;letter-spacing:0.06px;color:#5f6368">SIMPLE LIGHT</div>
<div class="t" style="left:296.9px;top:164.5px;font-size:6.2px;font-weight:700;letter-spacing:0.06px;color:#5f6368">CUSTOM</div>
<div class="a" style="left:294.5px;top:155.7px;width:118.5px;height:0.7px;background:#e3e3e3"></div>
<div class="a" style="left:294.5px;top:191.3px;width:118.5px;height:0.7px;background:#e3e3e3"></div>
<div class="a" style="left:294.4px;top:296.8px;width:118.3px;height:20.8px;border:0.8px solid #dfe1e5;border-radius:7px"></div>
<div class="t" style="left:343.1px;top:303.9px;font-size:7.7px;color:#2a2a2a;-webkit-text-stroke:0.1px #2a2a2a">Transparent</div>
<svg style="left:0;top:0" width="825" height="438">
<circle cx="300.00" cy="145.80" r="5.4" fill="#000000"/><circle cx="311.70" cy="145.80" r="5.4" fill="#ffffff" stroke="#dadce0" stroke-width="0.6"/><circle cx="323.40" cy="145.80" r="5.4" fill="#595959"/><circle cx="335.10" cy="145.80" r="5.4" fill="#eeeeee" stroke="#dadce0" stroke-width="0.6"/><circle cx="346.80" cy="145.80" r="5.4" fill="#4285f4"/><circle cx="358.50" cy="145.80" r="5.4" fill="#212121"/><circle cx="370.20" cy="145.80" r="5.4" fill="#78909c"/><circle cx="381.90" cy="145.80" r="5.4" fill="#ffab40"/><circle cx="393.60" cy="145.80" r="5.4" fill="#0097a7"/><circle cx="405.30" cy="145.80" r="5.4" fill="#eeff41"/><circle cx="300.00" cy="203.20" r="5.4" fill="#000000"/><circle cx="311.70" cy="203.20" r="5.4" fill="#434343"/><circle cx="323.40" cy="203.20" r="5.4" fill="#666666"/><circle cx="335.10" cy="203.20" r="5.4" fill="#999999"/><circle cx="346.80" cy="203.20" r="5.4" fill="#b7b7b7"/><circle cx="358.50" cy="203.20" r="5.4" fill="#cccccc"/><circle cx="370.20" cy="203.20" r="5.4" fill="#d9d9d9"/><circle cx="381.90" cy="203.20" r="5.4" fill="#efefef" stroke="#dadce0" stroke-width="0.6"/><circle cx="393.60" cy="203.20" r="5.4" fill="#f3f3f3" stroke="#dadce0" stroke-width="0.6"/><circle cx="405.30" cy="203.20" r="5.4" fill="#ffffff" stroke="#dadce0" stroke-width="0.6"/><circle cx="300.00" cy="214.90" r="5.4" fill="#980000"/><circle cx="311.70" cy="214.90" r="5.4" fill="#ff0000"/><circle cx="323.40" cy="214.90" r="5.4" fill="#ff9900"/><circle cx="335.10" cy="214.90" r="5.4" fill="#ffff00"/><circle cx="346.80" cy="214.90" r="5.4" fill="#00ff00"/><circle cx="358.50" cy="214.90" r="5.4" fill="#00ffff"/><circle cx="370.20" cy="214.90" r="5.4" fill="#4a86e8"/><circle cx="381.90" cy="214.90" r="5.4" fill="#0000ff"/><circle cx="393.60" cy="214.90" r="5.4" fill="#9900ff"/><circle cx="405.30" cy="214.90" r="5.4" fill="#ff00ff"/><circle cx="300.00" cy="226.60" r="5.4" fill="#e6b8af"/><circle cx="311.70" cy="226.60" r="5.4" fill="#f4cccc"/><circle cx="323.40" cy="226.60" r="5.4" fill="#fce5cd"/><circle cx="335.10" cy="226.60" r="5.4" fill="#fff2cc"/><circle cx="346.80" cy="226.60" r="5.4" fill="#d9ead3"/><circle cx="358.50" cy="226.60" r="5.4" fill="#d0e0e3"/><circle cx="370.20" cy="226.60" r="5.4" fill="#c9daf8"/><circle cx="381.90" cy="226.60" r="5.4" fill="#cfe2f3"/><circle cx="393.60" cy="226.60" r="5.4" fill="#d9d2e9"/><circle cx="405.30" cy="226.60" r="5.4" fill="#ead1dc"/><circle cx="300.00" cy="238.30" r="5.4" fill="#dd7e6b"/><circle cx="311.70" cy="238.30" r="5.4" fill="#ea9999"/><circle cx="323.40" cy="238.30" r="5.4" fill="#f9cb9c"/><circle cx="335.10" cy="238.30" r="5.4" fill="#ffe599"/><circle cx="346.80" cy="238.30" r="5.4" fill="#b6d7a8"/><circle cx="358.50" cy="238.30" r="5.4" fill="#a2c4c9"/><circle cx="370.20" cy="238.30" r="5.4" fill="#a4c2f4"/><circle cx="381.90" cy="238.30" r="5.4" fill="#9fc5e8"/><circle cx="393.60" cy="238.30" r="5.4" fill="#b4a7d6"/><circle cx="405.30" cy="238.30" r="5.4" fill="#d5a6bd"/><circle cx="300.00" cy="250.00" r="5.4" fill="#cc4125"/><circle cx="311.70" cy="250.00" r="5.4" fill="#e06666"/><circle cx="323.40" cy="250.00" r="5.4" fill="#f6b26b"/><circle cx="335.10" cy="250.00" r="5.4" fill="#ffd966"/><circle cx="346.80" cy="250.00" r="5.4" fill="#93c47d"/><circle cx="358.50" cy="250.00" r="5.4" fill="#76a5af"/><circle cx="370.20" cy="250.00" r="5.4" fill="#6d9eeb"/><circle cx="381.90" cy="250.00" r="5.4" fill="#6fa8dc"/><circle cx="393.60" cy="250.00" r="5.4" fill="#8e7cc3"/><circle cx="405.30" cy="250.00" r="5.4" fill="#c27ba0"/><circle cx="300.00" cy="261.70" r="5.4" fill="#a61c00"/><circle cx="311.70" cy="261.70" r="5.4" fill="#cc0000"/><circle cx="323.40" cy="261.70" r="5.4" fill="#e69138"/><circle cx="335.10" cy="261.70" r="5.4" fill="#f1c232"/><circle cx="346.80" cy="261.70" r="5.4" fill="#6aa84f"/><circle cx="358.50" cy="261.70" r="5.4" fill="#45818e"/><circle cx="370.20" cy="261.70" r="5.4" fill="#3c78d8"/><circle cx="381.90" cy="261.70" r="5.4" fill="#3d85c6"/><circle cx="393.60" cy="261.70" r="5.4" fill="#674ea7"/><circle cx="405.30" cy="261.70" r="5.4" fill="#a64d79"/><circle cx="300.00" cy="273.40" r="5.4" fill="#85200c"/><circle cx="311.70" cy="273.40" r="5.4" fill="#990000"/><circle cx="323.40" cy="273.40" r="5.4" fill="#b45f06"/><circle cx="335.10" cy="273.40" r="5.4" fill="#bf9000"/><circle cx="346.80" cy="273.40" r="5.4" fill="#38761d"/><circle cx="358.50" cy="273.40" r="5.4" fill="#134f5c"/><circle cx="370.20" cy="273.40" r="5.4" fill="#1155cc"/><circle cx="381.90" cy="273.40" r="5.4" fill="#0b5394"/><circle cx="393.60" cy="273.40" r="5.4" fill="#351c75"/><circle cx="405.30" cy="273.40" r="5.4" fill="#741b47"/><circle cx="300.00" cy="285.10" r="5.4" fill="#5b0f00"/><circle cx="311.70" cy="285.10" r="5.4" fill="#660000"/><circle cx="323.40" cy="285.10" r="5.4" fill="#783f04"/><circle cx="335.10" cy="285.10" r="5.4" fill="#7f6000"/><circle cx="346.80" cy="285.10" r="5.4" fill="#274e13"/><circle cx="358.50" cy="285.10" r="5.4" fill="#0c343d"/><circle cx="370.20" cy="285.10" r="5.4" fill="#1c4587"/><circle cx="381.90" cy="285.10" r="5.4" fill="#073763"/><circle cx="393.60" cy="285.10" r="5.4" fill="#20124d"/><circle cx="405.30" cy="285.10" r="5.4" fill="#4c1130"/>
  <!-- check on selected -->
  <path d="M308.6 249.8 L310.5 251.6 L314.4 247.7" fill="none" stroke="#1f1f1f" stroke-width="1.1"/>
  <!-- edit pencil -->
  <path d="M400.6 133.3 L401 131.4 L405.4 127 L407 128.6 L402.6 133 Z" fill="#1f1f1f"/>
  <!-- add circle -->
  <circle cx="300" cy="180.2" r="3.9" fill="none" stroke="#444746" stroke-width="0.9"/>
  <path d="M300 178.2 V182.2 M298 180.2 H302" stroke="#444746" stroke-width="0.9"/>
  <!-- eyedropper -->
  <path d="M309 183.8 L309.2 182.4 L313.2 178.4 L314.6 179.8 L310.6 183.8 Z M312.6 177.5 L315.5 180.4 M313.8 177.4 A1 1 0 0 1 315.6 179.2" fill="none" stroke="#444746" stroke-width="0.85"/>
  <!-- transparent icon -->
  <path d="M331.2 307.8 L334.4 304.6 L336.6 306.8 L335 310.4 Q333.4 311.2 332.2 309.8 Z" fill="#3c4043"/>
  <path d="M332.4 303 L334.4 305" stroke="#3c4043" stroke-width="1"/>
  <path d="M329.4 302.6 L337.6 311.2" stroke="#fff" stroke-width="1.6"/>
  <path d="M330.1 304.1 L337.3 310.9" stroke="#3c4043" stroke-width="1.1"/>
</svg>

</body></html>
